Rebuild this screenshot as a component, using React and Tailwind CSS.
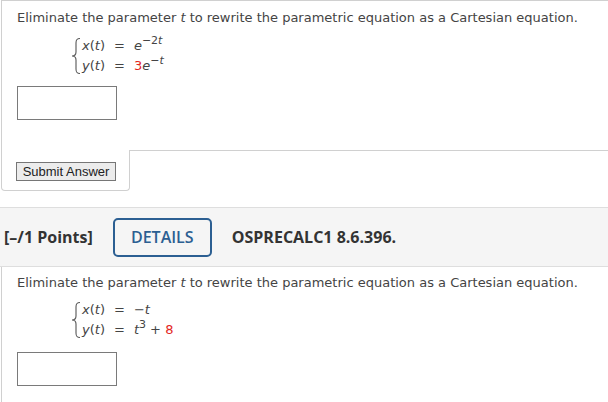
import React from 'react';

const Brace = () => (
  <svg width="10" height="38" viewBox="0 0 10 38" className="text-[#555] shrink-0">
    <path
      d="M9 1.5 C5.5 1.5 5 3 5 6 L5 15 C5 17.5 3.5 19 1 19 C3.5 19 5 20.5 5 23 L5 32 C5 35 5.5 36.5 9 36.5"
      fill="none"
      stroke="currentColor"
      strokeWidth="1.1"
    />
  </svg>
);

const Equation = ({ rows }) => (
  <div className="flex items-center pl-[54px]">
    <Brace />
    <div className="grid grid-cols-[auto_auto_auto] gap-x-[9px] ml-px text-[13px] leading-5">
      {rows.map((r, i) => (
        <React.Fragment key={i}>
          <span>{r.lhs}</span>
          <span>=</span>
          <span>{r.rhs}</span>
        </React.Fragment>
      ))}
    </div>
  </div>
);

const Sup = ({ children }) => (
  <sup className="text-[11px] relative -top-[6px]">{children}</sup>
);

const AnswerBox = ({ className = '' }) => (
  <div className={`w-[100px] h-[34px] border border-[#7a7a7a] bg-white ${className}`}></div>
);

const Question = () => (
  <p className="text-[13px] leading-5">
    Eliminate the parameter <i>t</i> to rewrite the parametric equation as a Cartesian equation.
  </p>
);

export default function App() {
  const q1 = [
    { lhs: <><i>x</i>(<i>t</i>)</>, rhs: <><i>e</i><Sup>−2<i>t</i></Sup></> },
    { lhs: <><i>y</i>(<i>t</i>)</>, rhs: <><span className="text-[#e3261d]">3</span><i>e</i><Sup>−<i>t</i></Sup></> },
  ];
  const q2 = [
    { lhs: <><i>x</i>(<i>t</i>)</>, rhs: <>−<i>t</i></> },
    { lhs: <><i>y</i>(<i>t</i>)</>, rhs: <><i>t</i><Sup>3</Sup> + <span className="text-[#e3261d]">8</span></> },
  ];

  return (
    <div className="w-[608px] h-[402px] overflow-hidden bg-white text-[#444]" style={{ fontFamily: '"DejaVu Sans", Verdana, sans-serif' }}>
      {/* first question */}
      <div className="ml-px">
        <div className="border-t border-l border-b border-[#d0d0d0] pl-[15px] pt-[7px] pb-[30px]">
          <Question />
          <div className="mt-2">
            <Equation rows={q1} />
          </div>
          <AnswerBox className="mt-[10px]" />
        </div>
        <div className="w-[129px] -mt-px bg-white border-l border-r border-b border-[#d0d0d0] rounded-b-[4px] pl-[14px] pt-3 pb-[9px] flex">
          <button className="block w-[100px] h-[19px] bg-[#ececec] border border-[#767676] text-[13px] leading-none text-[#222]" style={{ fontFamily: '"Liberation Sans", Arial, sans-serif' }}>
            Submit Answer
          </button>
        </div>
      </div>

      {/* header */}
      <div className="mt-4 h-[60px] bg-[#f5f5f5] border-t border-b border-[#dedede] flex items-center pl-1 text-[#333]" style={{ fontFamily: '"Open Sans", sans-serif' }}>
        <span className="text-[16px] font-bold">[–/1 Points]</span>
        <div className="ml-5 w-[99px] h-[39px] border-2 border-[#2c5f92] rounded-[5px] flex items-center justify-center text-[#2c5f92] text-[16px] font-semibold">
          DETAILS
        </div>
        <span className="ml-[20px] text-[16px] font-bold">OSPRECALC1 8.6.396.</span>
      </div>

      {/* second question */}
      <div className="ml-px border-l border-[#d0d0d0] pl-[15px] pt-[6px] h-[200px]">
        <Question />
        <div className="mt-[7px]">
          <Equation rows={q2} />
        </div>
        <AnswerBox className="mt-3" />
      </div>
    </div>
  );
}
